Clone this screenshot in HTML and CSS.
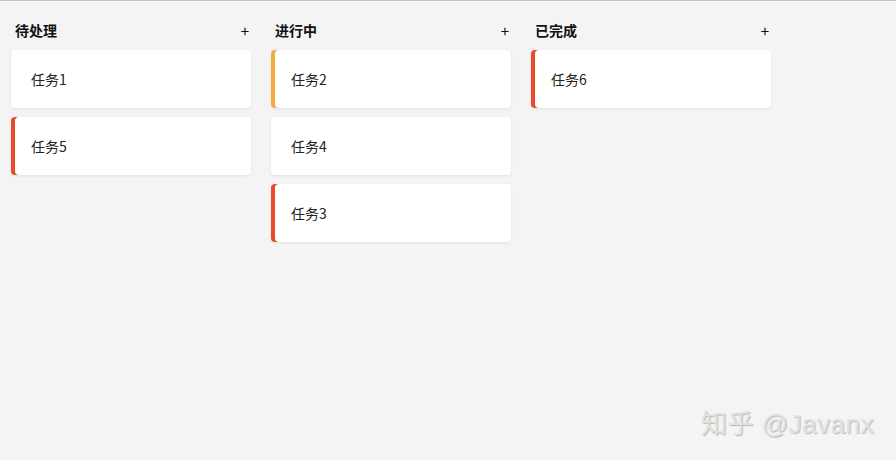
FILE: index.html
```html
<!DOCTYPE html>
<html lang="zh-CN">
<head>
  <meta charset="UTF-8">
  <meta name="viewport" content="width=device-width, initial-scale=1.0">
  <title>看板</title>
  <link rel="stylesheet" href="styles.css">
</head>
<body>
  <div class="board">
    <div class="column">
      <div class="column-header"><span class="title">待处理</span><span class="add">+</span></div>
      <div class="card">任务1</div>
      <div class="card red">任务5</div>
    </div>
    <div class="column">
      <div class="column-header"><span class="title">进行中</span><span class="add">+</span></div>
      <div class="card orange">任务2</div>
      <div class="card">任务4</div>
      <div class="card red">任务3</div>
    </div>
    <div class="column">
      <div class="column-header"><span class="title">已完成</span><span class="add">+</span></div>
      <div class="card red">任务6</div>
    </div>
  </div>
  <div class="watermark">知乎 @Javanx</div>
</body>
</html>
```

FILE: styles.css
```css
html, body { height: 100%; }
body { margin: 0; background: #f4f4f4; border-top: 1px solid #c4c4c4; box-sizing: border-box; font-family: "Noto Sans CJK SC", "Microsoft YaHei", sans-serif; color: #222; }
.board { display: flex; gap: 20px; padding: 18px 11px; align-items: flex-start; }
.column { width: 240px; display: flex; flex-direction: column; gap: 9px; }
.column-header { display: flex; justify-content: space-between; align-items: center; height: 22px; padding: 0 2px 0 4px; }
.title { font-size: 14px; font-weight: bold; color: #111; }
.add { font-size: 15px; color: #111; }
.card { height: 58px; display: flex; align-items: center; padding-left: 20px; background: #fff; border-radius: 4px; font-size: 14px; box-shadow: 0 1px 3px rgba(0,0,0,0.08); }
.card.red { box-shadow: inset 4px 0 0 #e84a2b, 0 1px 3px rgba(0,0,0,0.08); }
.card.orange { box-shadow: inset 4px 0 0 #f3ad3d, 0 1px 3px rgba(0,0,0,0.08); }
.watermark { position: absolute; right: 22px; bottom: 20px; font-family: "Liberation Sans", "Noto Sans CJK SC", sans-serif; font-size: 26px; color: #e2e2e2; text-shadow: 1px 1px 1px #b8b8b8; letter-spacing: 0.5px; }
```
